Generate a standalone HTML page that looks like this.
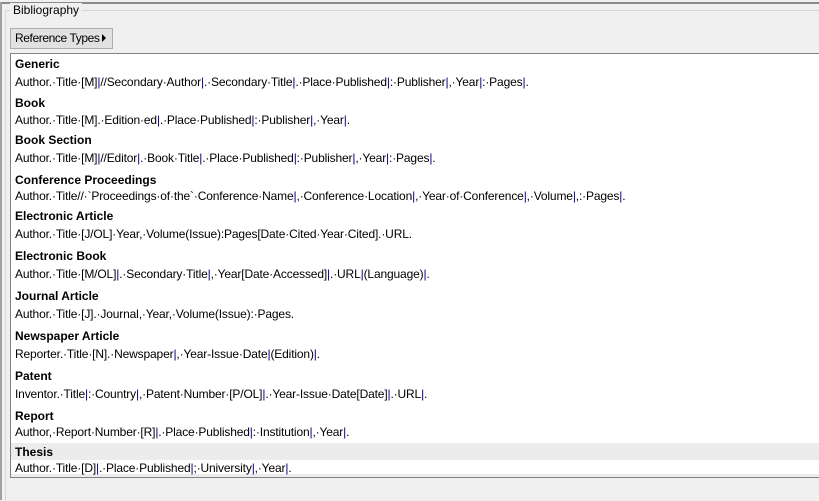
<!DOCTYPE html>
<html><head><style>
body{margin:0;width:819px;height:500px;background:#f0f0f0;position:relative;overflow:hidden;font-family:"Liberation Sans","DejaVu Sans",sans-serif;font-size:12px;color:#000}
.a{position:absolute}
.h{position:absolute;left:15px;font-weight:bold;white-space:nowrap}
.l{position:absolute;left:15px;white-space:nowrap;letter-spacing:-0.15px}
b.p{font-weight:normal;color:#000080}
</style></head><body>
<div class="a" style="left:0;top:2px;width:819px;height:2px;background:#8a8a8a"></div>
<div class="a" style="left:0;top:2px;width:2px;height:498px;background:#a0a0a0"></div>
<div class="a" style="left:5px;top:10px;width:814px;height:490px;border-left:1px solid #d5d5d5;border-top:1px solid #d5d5d5"></div>
<div class="a" style="left:10px;top:3px;background:#f0f0f0;padding:0 3px;font-size:12px">Bibliography</div>
<div class="a" style="left:10px;top:28px;width:103px;height:21px;border:1px solid #adadad;background:#e1e1e1;box-sizing:border-box;line-height:19px;padding-left:4px;font-size:12px;letter-spacing:-0.4px">Reference Types</div>
<div class="a" style="left:102px;top:34px;width:0;height:0;border-left:4px solid #000;border-top:4px solid transparent;border-bottom:4px solid transparent"></div>
<div class="a" style="left:10px;top:53px;width:809px;height:425px;background:#fff;border:1px solid #828282;border-right:none;box-sizing:border-box"></div>
<div class="a" style="left:11px;top:443px;width:808px;height:17px;background:#ececec"></div>
<div class="a" style="left:11px;top:474px;width:808px;height:3px;background:#ececec"></div>

<div class="h" style="top:57px">Generic</div>
<div class="l" style="top:75px">Author.·Title·[M]<b class="p">|</b>//Secondary·Author<b class="p">|</b>.·Secondary·Title<b class="p">|</b>.·Place·Published<b class="p">|</b>:·Publisher<b class="p">|</b>,·Year<b class="p">|</b>:·Pages<b class="p">|</b>.</div>
<div class="h" style="top:96px">Book</div>
<div class="l" style="top:113px">Author.·Title·[M].·Edition·ed<b class="p">|</b>.·Place·Published<b class="p">|</b>:·Publisher<b class="p">|</b>,·Year<b class="p">|</b>.</div>
<div class="h" style="top:133px">Book Section</div>
<div class="l" style="top:151px">Author.·Title·[M]<b class="p">|</b>//Editor<b class="p">|</b>.·Book·Title<b class="p">|</b>.·Place·Published<b class="p">|</b>:·Publisher<b class="p">|</b>,·Year<b class="p">|</b>:·Pages<b class="p">|</b>.</div>
<div class="h" style="top:173px">Conference Proceedings</div>
<div class="l" style="top:189px">Author.·Title//·`Proceedings·of·the`·Conference·Name<b class="p">|</b>,·Conference·Location<b class="p">|</b>,·Year·of·Conference<b class="p">|</b>,·Volume<b class="p">|</b>,:·Pages<b class="p">|</b>.</div>
<div class="h" style="top:209px">Electronic Article</div>
<div class="l" style="top:227px">Author.·Title·[J/OL]·Year,·Volume(Issue):Pages[Date·Cited·Year·Cited].·URL.</div>
<div class="h" style="top:249px">Electronic Book</div>
<div class="l" style="top:267px">Author.·Title·[M/OL]<b class="p">|</b>.·Secondary·Title<b class="p">|</b>,·Year[Date·Accessed]<b class="p">|</b>.·URL<b class="p">|</b>(Language)<b class="p">|</b>.</div>
<div class="h" style="top:289px">Journal Article</div>
<div class="l" style="top:307px">Author.·Title·[J].·Journal,·Year,·Volume(Issue):·Pages.</div>
<div class="h" style="top:329px">Newspaper Article</div>
<div class="l" style="top:347px">Reporter.·Title·[N].·Newspaper<b class="p">|</b>,·Year-Issue·Date<b class="p">|</b>(Edition)<b class="p">|</b>.</div>
<div class="h" style="top:369px">Patent</div>
<div class="l" style="top:387px">Inventor.·Title<b class="p">|</b>:·Country<b class="p">|</b>,·Patent·Number·[P/OL]<b class="p">|</b>.·Year-Issue·Date[Date]<b class="p">|</b>.·URL<b class="p">|</b>.</div>
<div class="h" style="top:409px">Report</div>
<div class="l" style="top:425px">Author,·Report·Number·[R]<b class="p">|</b>.·Place·Published<b class="p">|</b>:·Institution<b class="p">|</b>,·Year<b class="p">|</b>.</div>
<div class="h" style="top:445px">Thesis</div>
<div class="l" style="top:461px">Author.·Title·[D]<b class="p">|</b>.·Place·Published<b class="p">|</b>;·University<b class="p">|</b>,·Year<b class="p">|</b>.</div>
</body></html>
